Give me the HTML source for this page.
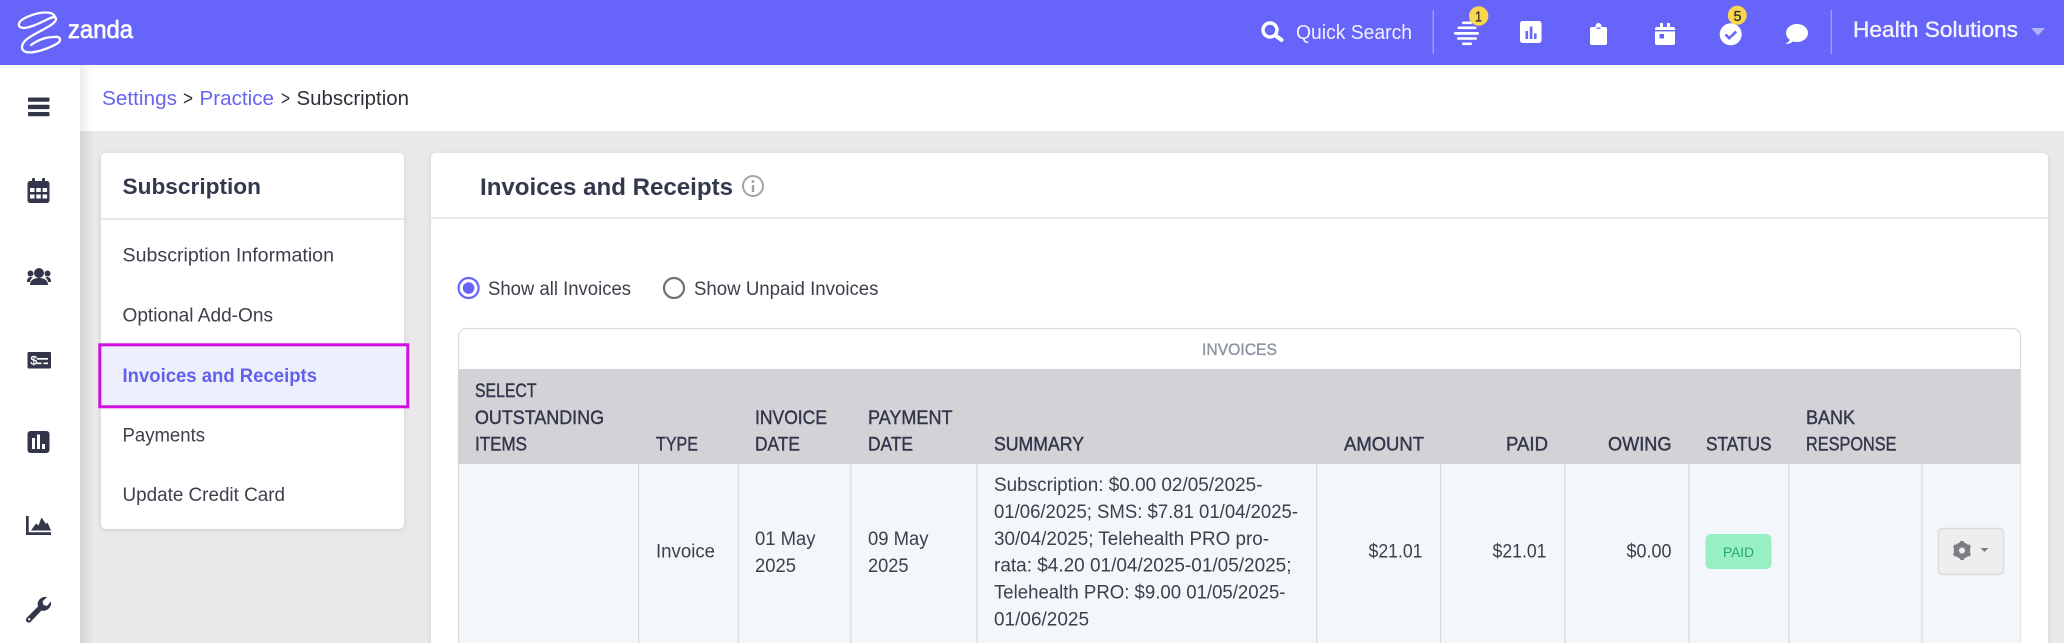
<!DOCTYPE html>
<html><head><meta charset="utf-8"><title>Subscription</title>
<style>
html,body{margin:0;padding:0;background:#e9e9e9}
svg{display:block}
text{font-family:"Liberation Sans",sans-serif;font-size:19px;fill:#3d404b}
.h{fill:#33364a;stroke:#33364a;stroke-width:.4}
</style></head><body>
<svg width="2064" height="643" viewBox="0 0 2064 643" xmlns="http://www.w3.org/2000/svg">
<defs>
<filter id="sh" x="-5%" y="-5%" width="110%" height="110%"><feDropShadow dx="0" dy="1" stdDeviation="2.500" flood-color="#000" flood-opacity=".12"/></filter>
<linearGradient id="g" x1="0" x2="1" y1="0" y2="0"><stop offset="0" stop-color="#d5d5d5"/><stop offset="1" stop-color="#e9e9e9"/></linearGradient>
<linearGradient id="g2" x1="0" x2="1" y1="0" y2="0"><stop offset="0" stop-color="#ececec"/><stop offset="1" stop-color="#fff"/></linearGradient>
</defs>
<rect width="2064" height="643" fill="#e9e9e9"/>
<rect x="80" y="65" width="1984" height="66" fill="#fff"/>
<rect x="80" y="65" width="12" height="66" fill="url(#g2)"/>
<rect x="80" y="131" width="14" height="512" fill="url(#g)"/>
<rect x="0" y="65" width="80" height="578" fill="#fff"/>

<!-- top bar -->
<rect width="2064" height="65" fill="#6764f9"/>
<path d="M55 17C53 10 38 12 27 17C20 20 17 24 20 27C24 30 36 25 44 21C50 18 56 15 56 19C56 25 38 31 27 39C21 44 20 50 26 52C34 54 50 48 58 43C62 40 60 36 54 37C46 37 38 40 31 45" fill="none" stroke="#fff" stroke-width="2.300" stroke-linecap="round"/>
<text x="68" y="38" textLength="65" lengthAdjust="spacingAndGlyphs" style="font-size:25px;fill:#fff;stroke:#fff;stroke-width:.7">zanda</text>

<circle cx="1270" cy="30" r="7" fill="none" stroke="#fff" stroke-width="3.400"/>
<path d="M1275.500 35.500L1281.500 40" stroke="#fff" stroke-width="4" stroke-linecap="round"/>
<text x="1296" y="39" textLength="116" lengthAdjust="spacingAndGlyphs" style="font-size:20px;fill:#f1f0ff">Quick Search</text>
<rect x="1432.500" y="10" width="1.500" height="44" fill="#9a98fb"/>
<g fill="#fff">
<rect x="1462" y="21.500" width="10" height="2.600" rx="1.300"/><rect x="1457.500" y="26.500" width="19" height="2.600" rx="1.300"/><rect x="1454" y="32" width="25" height="2.800" rx="1.400"/><rect x="1457" y="37.200" width="20" height="2.600" rx="1.300"/><rect x="1462" y="42.500" width="10" height="2.600" rx="1.300"/>
</g>
<circle cx="1478.700" cy="16" r="9.700" fill="#f8d64e"/>
<text x="1475" y="21.500" textLength="7" lengthAdjust="spacingAndGlyphs" style="font-size:15px;fill:#33302a;stroke:#33302a;stroke-width:.3">1</text>
<rect x="1520" y="21" width="21.500" height="22" rx="2.500" fill="#fff"/>
<g fill="#6764f9"><rect x="1525.500" y="31" width="2.600" height="8"/><rect x="1529.800" y="26.500" width="2.600" height="12.500"/><rect x="1534" y="33.500" width="2.600" height="5.500"/></g>
<path d="M1592 27h3.500v-1a3 3 0 0 1 6 0v1h3.500a2 2 0 0 1 2 2v14a2 2 0 0 1-2 2h-13a2 2 0 0 1-2-2v-14a2 2 0 0 1 2-2z" fill="#fff"/>
<rect x="1596.500" y="27.500" width="4" height="1.300" fill="#6764f9"/>
<path d="M1657 27h3v-4h3v4h4v-4h3v4h3a2 2 0 0 1 2 2v14a2 2 0 0 1-2 2h-16a2 2 0 0 1-2-2v-14a2 2 0 0 1 2-2z" fill="#fff"/>
<rect x="1655" y="30" width="20" height="1.400" fill="#6764f9"/>
<rect x="1659.500" y="34" width="4.500" height="4.500" fill="#6764f9"/>
<circle cx="1730.700" cy="34.300" r="11" fill="#fff"/>
<path d="M1725.500 34.500l3.700 3.700l7-6.600" fill="none" stroke="#6764f9" stroke-width="2.600"/>
<circle cx="1737.300" cy="15.300" r="9.500" fill="#f8d64e"/>
<text x="1733.500" y="20.800" textLength="8" lengthAdjust="spacingAndGlyphs" style="font-size:15px;fill:#33302a;stroke:#33302a;stroke-width:.3">5</text>
<ellipse cx="1797" cy="33" rx="11" ry="9" fill="#fff"/>
<path d="M1790 39c-.5 2-2.500 4-5 5c3.500 0 6.500-1 8.500-3z" fill="#fff"/>
<rect x="1830.500" y="10" width="1.500" height="44" fill="#9a98fb"/>
<text x="1853" y="37" textLength="165" lengthAdjust="spacingAndGlyphs" style="font-size:22px;fill:#f4f4ff;stroke:#f4f4ff;stroke-width:.35">Health Solutions</text>
<path d="M2031 28h14l-7 7.500z" fill="#b3b1fc"/>

<!-- side icons -->
<g fill="#33364a">
<rect x="28" y="97.500" width="21.500" height="4.300" rx="1"/><rect x="28" y="104.800" width="21.500" height="4.300" rx="1"/><rect x="28" y="112" width="21.500" height="4.300" rx="1"/>
<rect x="27.500" y="181" width="22" height="22" rx="2.500"/><rect x="32" y="178" width="3" height="6" rx="1"/><rect x="42" y="178" width="3" height="6" rx="1"/>
<circle cx="39" cy="273" r="5"/><path d="M30 285c0-5 4-7 9-7s9 2 9 7z"/>
<circle cx="30.500" cy="273.500" r="3"/><circle cx="47.500" cy="273.500" r="3"/><path d="M27 282c0-3 1-5 4-5l2 .5c-2 1-3 3-3 4.500zM51 282c0-3-1-5-4-5l-2 .5c2 1 3 3 3 4.500z"/>
<rect x="27.500" y="352" width="23.500" height="16.500" rx="1"/>
<rect x="27.500" y="431" width="22" height="22" rx="3"/>
<path d="M26 516h2.700v16.300H51v2.700H26z"/>
<path d="M31 530.500l5-7l2.500 2l3-8l4.500 6.500l1.500-1.500l3.500 8z"/>
<path d="M26.500 618L38 606.500C36.500 601 41 596 47 597L42.500 601.500L43.500 605L47 606L51 601.500C52 607 47 612 41.500 610.500L30.500 622C28 624 24.500 621 26.500 618Z"/>
</g>
<g fill="#fff">
<rect x="30" y="188" width="4.500" height="4"/><rect x="36.300" y="188" width="4.500" height="4"/><rect x="42.600" y="188" width="4.500" height="4"/>
<rect x="30" y="194.500" width="4.500" height="4"/><rect x="36.300" y="194.500" width="4.500" height="4"/><rect x="42.600" y="194.500" width="4.500" height="4"/>
<rect x="37" y="358" width="11" height="1.700"/><rect x="37" y="362.500" width="4.500" height="1.700"/><rect x="43.500" y="362.500" width="4.500" height="1.700"/>
<rect x="32" y="438" width="3" height="11"/><rect x="37" y="434.500" width="3" height="14.500"/><rect x="42" y="444" width="3" height="5"/>
<circle cx="29.200" cy="619.300" r="1.200"/>
</g>
<text x="30.500" y="364.500" style="font-size:12px;fill:#fff;stroke:#fff;stroke-width:.3">$</text>

<!-- breadcrumb -->
<text x="102" y="105" textLength="75" lengthAdjust="spacingAndGlyphs" style="font-size:20px;fill:#6764f0">Settings</text>
<text x="183" y="105" textLength="10" lengthAdjust="spacingAndGlyphs" style="font-size:20px;fill:#2f3038">&gt;</text>
<text x="199.500" y="105" textLength="74.500" lengthAdjust="spacingAndGlyphs" style="font-size:20px;fill:#6764f0">Practice</text>
<text x="281" y="105" textLength="9" lengthAdjust="spacingAndGlyphs" style="font-size:20px;fill:#2f3038">&gt;</text>
<text x="296.500" y="105" textLength="112.500" lengthAdjust="spacingAndGlyphs" style="font-size:20px;fill:#2f3038">Subscription</text>

<!-- left card -->
<rect x="101" y="153" width="303" height="376" rx="5" fill="#fff" filter="url(#sh)"/>
<rect x="101" y="218.500" width="303" height="1.200" fill="#d9d9d9"/>
<text x="122.500" y="194" textLength="138.500" lengthAdjust="spacingAndGlyphs" style="font-size:22px;font-weight:bold;fill:#33394d">Subscription</text>
<text x="122.500" y="261.500" textLength="211.500" lengthAdjust="spacingAndGlyphs">Subscription Information</text>
<text x="122.500" y="321.500" textLength="150.500" lengthAdjust="spacingAndGlyphs">Optional Add-Ons</text>
<rect x="99.800" y="344.800" width="308" height="62" fill="#eeeffd" stroke="#d10ee0" stroke-width="3"/>
<text x="122.500" y="382" textLength="194.500" lengthAdjust="spacingAndGlyphs" style="font-weight:bold;fill:#6360ee">Invoices and Receipts</text>
<text x="122.500" y="441.500" textLength="82.500" lengthAdjust="spacingAndGlyphs">Payments</text>
<text x="122.500" y="501" textLength="162.500" lengthAdjust="spacingAndGlyphs">Update Credit Card</text>

<!-- right card -->
<rect x="431" y="153" width="1617" height="500" rx="5" fill="#fff" filter="url(#sh)"/>
<rect x="431" y="217.500" width="1617" height="1.200" fill="#dcdcdc"/>
<text x="480" y="195" textLength="253" lengthAdjust="spacingAndGlyphs" style="font-size:24px;font-weight:bold;fill:#33394d">Invoices and Receipts</text>
<circle cx="753" cy="186" r="10" fill="none" stroke="#a4a4a8" stroke-width="2"/>
<rect x="751.800" y="185" width="2.400" height="7" fill="#a4a4a8"/><circle cx="753" cy="181.500" r="1.500" fill="#a4a4a8"/>

<circle cx="468.600" cy="288" r="10" fill="#fff" stroke="#6764f9" stroke-width="2.200"/>
<circle cx="468.600" cy="288" r="5.800" fill="#6764f9"/>
<text x="488" y="295" textLength="143" lengthAdjust="spacingAndGlyphs">Show all Invoices</text>
<circle cx="674" cy="288" r="10" fill="#fff" stroke="#6f6f78" stroke-width="2.200"/>
<text x="694" y="295" textLength="184.500" lengthAdjust="spacingAndGlyphs">Show Unpaid Invoices</text>

<!-- table -->
<rect x="458.500" y="328.500" width="1562" height="330" rx="8" fill="#fff" stroke="#dcdcdc" stroke-width="1.200"/>
<text x="1202" y="355" textLength="75" lengthAdjust="spacingAndGlyphs" style="font-size:17px;fill:#8a939f;stroke:#8a939f;stroke-width:.35">INVOICES</text>
<rect x="458" y="369" width="1562.500" height="95" fill="#d3d2d7"/>
<rect x="458" y="464" width="1562.500" height="179" fill="#f3f6fa"/>
<g fill="#d6dade">
<rect x="458" y="464" width="1.200" height="179"/>
<rect x="638" y="464" width="1.200" height="179"/><rect x="737.700" y="464" width="1.200" height="179"/><rect x="850.200" y="464" width="1.200" height="179"/><rect x="976.300" y="464" width="1.200" height="179"/><rect x="1316" y="464" width="1.200" height="179"/><rect x="1440" y="464" width="1.200" height="179"/><rect x="1564.300" y="464" width="1.200" height="179"/><rect x="1688.300" y="464" width="1.200" height="179"/><rect x="1788.300" y="464" width="1.200" height="179"/><rect x="1921.300" y="464" width="1.200" height="179"/>
</g>
<text class="h" x="475" y="397" textLength="61.500" lengthAdjust="spacingAndGlyphs">SELECT</text>
<text class="h" x="475" y="424" textLength="129" lengthAdjust="spacingAndGlyphs">OUTSTANDING</text>
<text class="h" x="475" y="450.500" textLength="52" lengthAdjust="spacingAndGlyphs">ITEMS</text>
<text class="h" x="656" y="450.500" textLength="42" lengthAdjust="spacingAndGlyphs">TYPE</text>
<text class="h" x="755" y="424" textLength="72" lengthAdjust="spacingAndGlyphs">INVOICE</text>
<text class="h" x="755" y="450.500" textLength="45" lengthAdjust="spacingAndGlyphs">DATE</text>
<text class="h" x="868" y="424" textLength="84.500" lengthAdjust="spacingAndGlyphs">PAYMENT</text>
<text class="h" x="868" y="450.500" textLength="45" lengthAdjust="spacingAndGlyphs">DATE</text>
<text class="h" x="994" y="450.500" textLength="90" lengthAdjust="spacingAndGlyphs">SUMMARY</text>
<text class="h" x="1344" y="450.500" textLength="80" lengthAdjust="spacingAndGlyphs">AMOUNT</text>
<text class="h" x="1506" y="450.500" textLength="42" lengthAdjust="spacingAndGlyphs">PAID</text>
<text class="h" x="1608" y="450.500" textLength="63.500" lengthAdjust="spacingAndGlyphs">OWING</text>
<text class="h" x="1706" y="450.500" textLength="65.500" lengthAdjust="spacingAndGlyphs">STATUS</text>
<text class="h" x="1806" y="424" textLength="49" lengthAdjust="spacingAndGlyphs">BANK</text>
<text class="h" x="1806" y="450.500" textLength="90.500" lengthAdjust="spacingAndGlyphs">RESPONSE</text>

<text x="656" y="557.500" textLength="59" lengthAdjust="spacingAndGlyphs">Invoice</text>
<text x="755" y="545" textLength="60.500" lengthAdjust="spacingAndGlyphs">01 May</text>
<text x="755" y="572" textLength="41" lengthAdjust="spacingAndGlyphs">2025</text>
<text x="868" y="545" textLength="60.500" lengthAdjust="spacingAndGlyphs">09 May</text>
<text x="868" y="572" textLength="40.500" lengthAdjust="spacingAndGlyphs">2025</text>
<text x="994" y="491" textLength="268.500" lengthAdjust="spacingAndGlyphs">Subscription: $0.00 02/05/2025-</text>
<text x="994" y="518" textLength="304" lengthAdjust="spacingAndGlyphs">01/06/2025; SMS: $7.81 01/04/2025-</text>
<text x="994" y="545" textLength="275" lengthAdjust="spacingAndGlyphs">30/04/2025; Telehealth PRO pro-</text>
<text x="994" y="571.500" textLength="297.500" lengthAdjust="spacingAndGlyphs">rata: $4.20 01/04/2025-01/05/2025;</text>
<text x="994" y="598.500" textLength="291.500" lengthAdjust="spacingAndGlyphs">Telehealth PRO: $9.00 01/05/2025-</text>
<text x="994" y="625.500" textLength="95" lengthAdjust="spacingAndGlyphs">01/06/2025</text>
<text x="1368.500" y="557.500" textLength="54" lengthAdjust="spacingAndGlyphs">$21.01</text>
<text x="1492.500" y="557.500" textLength="54" lengthAdjust="spacingAndGlyphs">$21.01</text>
<text x="1626.500" y="557.500" textLength="45" lengthAdjust="spacingAndGlyphs">$0.00</text>
<rect x="1705.500" y="534" width="66" height="35" rx="5" fill="#98f0c2"/>
<text x="1723" y="557" textLength="31" lengthAdjust="spacingAndGlyphs" style="font-size:14px;fill:#25a868">PAID</text>
<rect x="1938.500" y="528.500" width="65" height="46" rx="4" fill="#eeeeef" stroke="#dcdcdf" stroke-width="1.500"/>
<g fill="#7c7c86" transform="translate(1962 550.500)">
<circle r="6.200" fill="none" stroke="#7c7c86" stroke-width="4"/>
<rect x="-1.800" y="-9.500" width="3.600" height="19"/><rect x="-1.800" y="-9.500" width="3.600" height="19" transform="rotate(60)"/><rect x="-1.800" y="-9.500" width="3.600" height="19" transform="rotate(120)"/>
<circle r="3" fill="#eeeeef"/>
</g>
<path d="M1980.500 548h8l-4 4z" fill="#7c7c86"/>
</svg>
</body></html>
